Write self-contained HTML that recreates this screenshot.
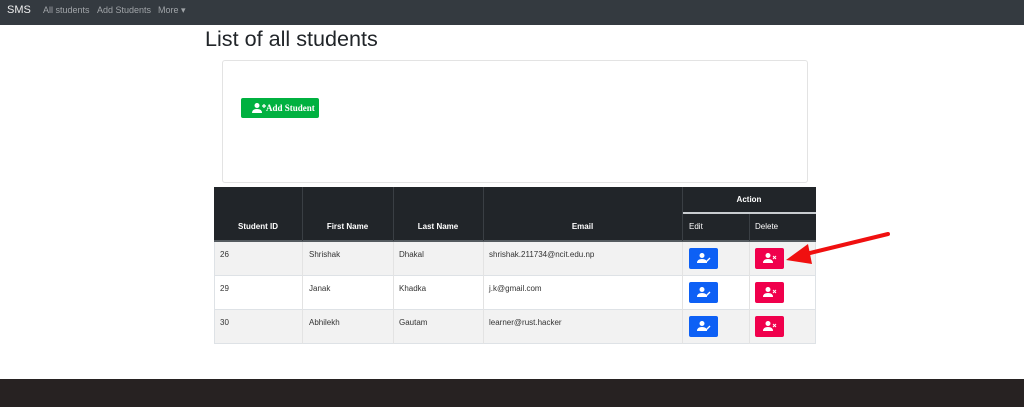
<!DOCTYPE html><html><head><style>
body{margin:0;width:1024px;height:407px;position:relative;background:#fff;font-family:"Liberation Sans",sans-serif;overflow:hidden}
.nav{position:absolute;left:0;top:0;width:1024px;height:25px;background:#343a40}
.nav span{position:absolute;top:5px;font-size:9px;color:#a0a4a8}
.foot{position:absolute;left:0;top:379px;width:1024px;height:28px;background:#272222}
h1{position:absolute;left:205px;top:26px;margin:0;font-weight:400;font-size:21.6px;color:#212529}
.card{position:absolute;left:222px;top:60px;width:584px;height:121px;border:1px solid #e3e3e3;border-radius:3px}
.add{position:absolute;left:241px;top:98px;width:78px;height:20px;background:#00b140;border-radius:2px;color:#fff;font-family:"Liberation Serif",serif;font-weight:bold;font-size:9px;line-height:20px}
.cell{position:absolute;font-size:8px;box-sizing:border-box}
.b{position:absolute;width:29px;height:21px;border-radius:2px}
</style></head><body>
<div class="nav"><span style="left:7px;font-size:11px;top:4px;color:#eee">SMS</span><span style="left:43px">All students</span><span style="left:97px">Add Students</span><span style="left:158px">More ▾</span></div>
<h1>List of all students</h1>
<div class="card"></div>
<div class="add"><svg width="14" height="10" style="position:absolute;left:11px;top:5px" viewBox="0 0 14 10"><circle cx="5" cy="2.5" r="2.5" fill="#fff"/><path d="M0 10q0-4 5-4t5 4z" fill="#fff"/><path d="M10 3h4M12 1v4" stroke="#fff" stroke-width="1.2"/></svg><span style="position:absolute;left:25px">Add Student</span></div>
<div style="position:absolute;left:214px;top:187px;width:602px;height:54px;background:#212529"></div>
<div style="position:absolute;left:682px;top:212px;width:134px;height:2px;background:#c8ccd0"></div>
<div style="position:absolute;left:214px;top:240px;width:602px;height:2px;background:#555b60"></div>
<div class="cell" style="left:214px;top:222px;width:88px;color:#fff;font-weight:bold;text-align:center">Student ID</div>
<div class="cell" style="left:302px;top:222px;width:91px;color:#fff;font-weight:bold;text-align:center">First Name</div>
<div class="cell" style="left:393px;top:222px;width:90px;color:#fff;font-weight:bold;text-align:center">Last Name</div>
<div class="cell" style="left:483px;top:222px;width:199px;color:#fff;font-weight:bold;text-align:center">Email</div>
<div class="cell" style="left:682px;top:195px;width:134px;color:#fff;font-weight:bold;text-align:center">Action</div>
<div class="cell" style="left:689px;top:222px;color:#fff">Edit</div>
<div class="cell" style="left:755px;top:222px;color:#fff">Delete</div>
<div style="position:absolute;left:302px;top:187px;width:1px;height:54px;background:#3a3f44"></div>
<div style="position:absolute;left:393px;top:187px;width:1px;height:54px;background:#3a3f44"></div>
<div style="position:absolute;left:483px;top:187px;width:1px;height:54px;background:#3a3f44"></div>
<div style="position:absolute;left:682px;top:187px;width:1px;height:54px;background:#3a3f44"></div>
<div style="position:absolute;left:749px;top:214px;width:1px;height:27px;background:#3a3f44"></div>
<div id="rows"></div>
<script>
var d=[["26","Shrishak","Dhakal","shrishak.211734@ncit.edu.np"],["29","Janak","Khadka","j.k@gmail.com"],["30","Abhilekh","Gautam","learner@rust.hacker"]];
var xs=[220,309,399,489],h="";
d.forEach(function(r,i){var t=242+i*34;
h+='<div style="position:absolute;left:214px;top:'+t+'px;width:602px;height:34px;background:'+(i%2?'#fff':'#f2f2f2')+';border-bottom:1px solid #dee2e6;box-sizing:border-box;border-right:1px solid #dee2e6;border-left:1px solid #dee2e6"></div>';
[302,393,483,682,749].forEach(function(x){h+='<div style="position:absolute;left:'+x+'px;top:'+t+'px;width:1px;height:34px;background:#e3e3e3"></div>'});
r.forEach(function(v,j){h+='<div class="cell" style="left:'+xs[j]+'px;top:'+(t+8)+'px;color:#333">'+v+'</div>'});
var ic='<svg width="14" height="10" style="position:absolute;left:8px;top:5px" viewBox="0 0 14 10"><circle cx="5" cy="2.5" r="2.5" fill="#fff"/><path d="M0 10q0-4 5-4t5 4z" fill="#fff"/>';
h+='<div class="b" style="left:689px;top:'+(t+6)+'px;background:#0d60f5">'+ic+'<path d="M9 9l4-4" stroke="#fff" stroke-width="1.3"/></svg></div>';
h+='<div class="b" style="left:755px;top:'+(t+6)+'px;background:#f0004c">'+ic+'<path d="M10 3l3 3M13 3l-3 3" stroke="#fff" stroke-width="1"/></svg></div>';});
document.getElementById('rows').innerHTML=h;
</script>
<svg style="position:absolute;left:0;top:0" width="1024" height="407"><path d="M888 234L806 254" stroke="#f01010" stroke-width="4" stroke-linecap="round"/><path d="M786 260L808 244L812 264Z" fill="#f01010"/></svg>
<div class="foot"></div>
</body></html>
